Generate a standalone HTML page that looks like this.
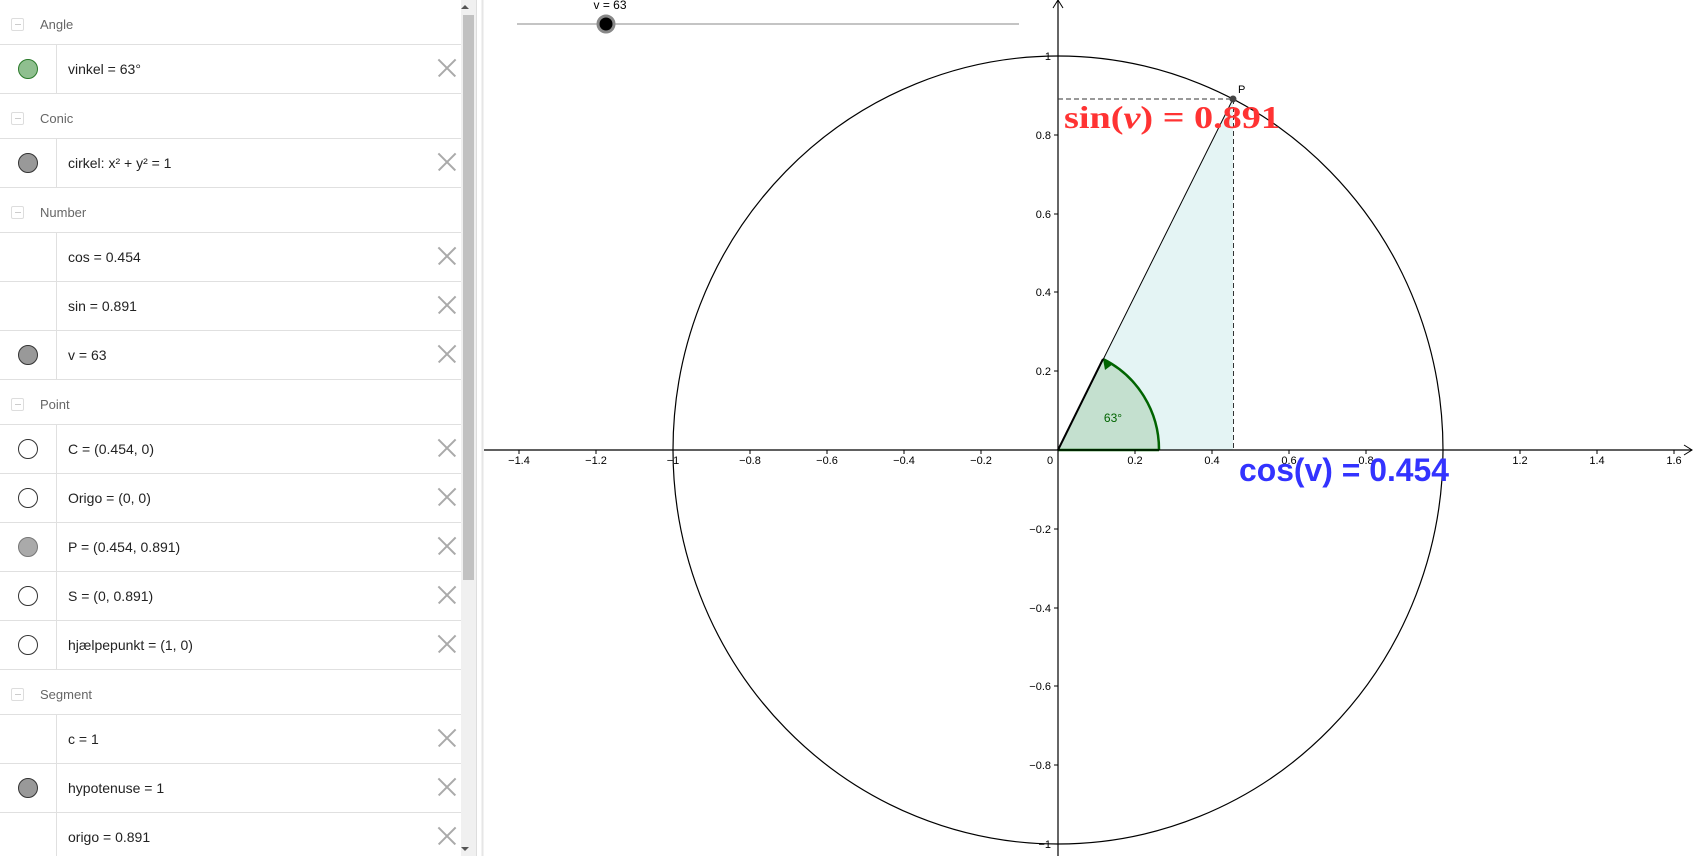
<!DOCTYPE html>
<html><head><meta charset="utf-8"><style>
*{margin:0;padding:0;box-sizing:border-box}
body{width:1696px;height:856px;overflow:hidden;background:#fff;font-family:"Liberation Sans",sans-serif;position:relative}
#side{position:absolute;left:0;top:0;width:461px;height:856px;overflow:hidden}
.h{height:45px;border-bottom:1px solid #e0e0e0;position:relative;font-size:13px;color:#666}
.h span{position:absolute;left:40px;top:17px}
.h i{position:absolute;left:11px;top:18px;width:13px;height:13px;border:1px solid #ddd;border-radius:2px}
.h i:after{content:"";position:absolute;left:3px;top:5px;width:6px;height:1px;background:#ccc}
.r{height:49px;border-bottom:1px solid #e0e0e0;position:relative;font-size:14px;color:#222}
.r:before{content:"";position:absolute;left:56px;top:0;bottom:0;border-left:1px solid #e0e0e0}
.r span{position:absolute;left:68px;top:16px}
.r b{position:absolute;left:18px;top:14px;width:20px;height:20px;border-radius:50%;border:1px solid #333}
.r u{position:absolute;left:438px;top:14px;width:18px;height:18px}
.r u:before,.r u:after{content:"";position:absolute;left:-3px;top:8px;width:24px;height:1.6px;background:#aaa;transform:rotate(45deg)}
.r u:after{transform:rotate(-45deg)}
#sb{position:absolute;left:461px;top:0;width:16px;height:856px;background:#f0f0f0;border-right:1px solid #ddd}
#th{position:absolute;left:463px;top:15px;width:11px;height:565px;background:#c1c1c1}
</style></head><body>
<div id="side">
<div class="h"><i></i><span>Angle</span></div>
<div class="r"><b style="background:#8fbf8f;border-color:#2a7a2a"></b><span>vinkel = 63°</span><u></u></div>
<div class="h"><i></i><span>Conic</span></div>
<div class="r"><b style="background:#999"></b><span>cirkel: x² + y² = 1</span><u></u></div>
<div class="h"><i></i><span>Number</span></div>
<div class="r"><span>cos = 0.454</span><u></u></div>
<div class="r"><span>sin = 0.891</span><u></u></div>
<div class="r"><b style="background:#999"></b><span>v = 63</span><u></u></div>
<div class="h"><i></i><span>Point</span></div>
<div class="r"><b style="background:#fff"></b><span>C = (0.454, 0)</span><u></u></div>
<div class="r"><b style="background:#fff"></b><span>Origo = (0, 0)</span><u></u></div>
<div class="r"><b style="background:#aaa;border-color:#777"></b><span>P = (0.454, 0.891)</span><u></u></div>
<div class="r"><b style="background:#fff"></b><span>S = (0, 0.891)</span><u></u></div>
<div class="r"><b style="background:#fff"></b><span>hjælpepunkt = (1, 0)</span><u></u></div>
<div class="h"><i></i><span>Segment</span></div>
<div class="r"><span>c = 1</span><u></u></div>
<div class="r"><b style="background:#999"></b><span>hypotenuse = 1</span><u></u></div>
<div class="r"><span>origo = 0.891</span><u></u></div>
</div>
<div id="sb"></div><div id="th"></div>
<svg style="position:absolute;left:0;top:0" width="1696" height="856" font-family="Liberation Sans, sans-serif">
<path d="M465 5 l4 4 h-8z M465 851 l4 -4 h-8z" fill="#555"/>
<line x1="482.5" y1="0" x2="482.5" y2="856" stroke="#e6e6e6" stroke-width="2"/>
<line x1="517" y1="24" x2="1019" y2="24" stroke="#888"/>
<circle cx="606" cy="24" r="8" fill="#000" stroke="#888" stroke-width="3"/>
<text x="610" y="9" font-size="12" text-anchor="middle">v = 63</text>
<polygon points="1058,450 1233,99 1233,450" fill="#e4f4f4"/>
<path d="M1058,450 L1159,450 A101,101 0 0 0 1103,359 Z" fill="#c4e0cf"/>
<path d="M1159,450 A101,101 0 0 0 1103,359" fill="none" stroke="#006400" stroke-width="2.5"/>
<line x1="1058" y1="450" x2="1159" y2="450" stroke="#006400" stroke-width="2.5"/>
<path d="M1103,359 l10,5 l-8,6z" fill="#006400"/>
<text x="1113" y="422" font-size="12" fill="#006400" text-anchor="middle">63°</text>
<line x1="484" y1="450" x2="1692" y2="450" stroke="#000" stroke-width="1.2"/>
<path d="M1684 445 L1692 450 L1684 455" fill="none" stroke="#000"/>
<line x1="1058" y1="0" x2="1058" y2="856" stroke="#000" stroke-width="1.2"/>
<path d="M1053 8 L1058 0 L1063 8" fill="none" stroke="#000"/>
<g font-size="11" text-anchor="middle" fill="#000">
<text x="519" y="464">−1.4</text><text x="596" y="464">−1.2</text><text x="673" y="464">−1</text><text x="750" y="464">−0.8</text><text x="827" y="464">−0.6</text><text x="904" y="464">−0.4</text><text x="981" y="464">−0.2</text><text x="1050" y="464">0</text><text x="1135" y="464">0.2</text><text x="1212" y="464">0.4</text><text x="1289" y="464">0.6</text><text x="1366" y="464">0.8</text><text x="1520" y="464">1.2</text><text x="1597" y="464">1.4</text><text x="1674" y="464">1.6</text>
</g>
<g stroke="#000"><path d="M519 450v4M596 450v4M673 450v4M750 450v4M827 450v4M904 450v4M981 450v4M1135 450v4M1212 450v4M1289 450v4M1366 450v4M1443 450v4M1520 450v4M1597 450v4M1674 450v4"/>
<path d="M1054 56h4M1054 135h4M1054 214h4M1054 292h4M1054 371h4M1054 529h4M1054 608h4M1054 686h4M1054 765h4M1054 844h4"/></g>
<g font-size="11" text-anchor="end">
<text x="1051" y="60">1</text><text x="1051" y="139">0.8</text><text x="1051" y="218">0.6</text><text x="1051" y="296">0.4</text><text x="1051" y="375">0.2</text><text x="1051" y="533">−0.2</text><text x="1051" y="612">−0.4</text><text x="1051" y="690">−0.6</text><text x="1051" y="769">−0.8</text><text x="1051" y="848">−1</text>
</g>
<ellipse cx="1058" cy="450" rx="385" ry="394" fill="none" stroke="#000" stroke-width="1.2"/>
<line x1="1058" y1="450" x2="1233" y2="99" stroke="#000" stroke-width="1"/>
<line x1="1058" y1="450" x2="1103" y2="359" stroke="#000" stroke-width="2"/>
<line x1="1058" y1="99" x2="1233" y2="99" stroke="#333" stroke-dasharray="5,3"/>
<line x1="1233.5" y1="99" x2="1233.5" y2="450" stroke="#333" stroke-dasharray="5,3"/>
<circle cx="1233" cy="99" r="3.5" fill="#444"/>
<text x="1238" y="93" font-size="11">P</text>
<text x="1064" y="128" font-size="32" font-weight="bold" fill="#ff3333" font-family="Liberation Serif, serif" textLength="216" lengthAdjust="spacingAndGlyphs">sin(<tspan font-style="italic">v</tspan>) = 0.891</text>
<text x="1239" y="481" font-size="32" fill="#3333ff" font-weight="bold" textLength="210" lengthAdjust="spacingAndGlyphs">cos(v) = 0.454</text>
</svg>
</body></html>
